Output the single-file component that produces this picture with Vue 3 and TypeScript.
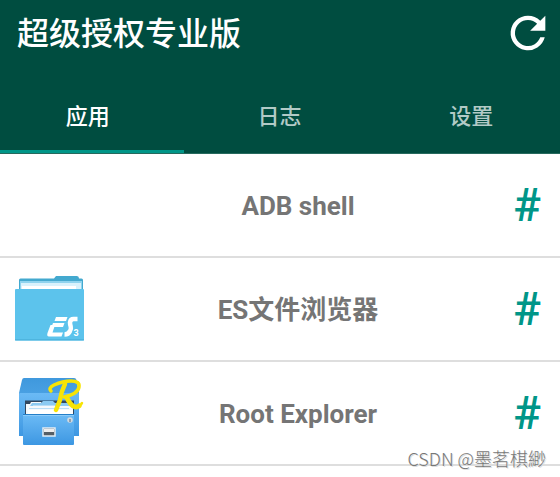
<script setup lang="ts">
import { ref } from 'vue'

interface AppEntry {
  id: string
  name: string
  icon: 'none' | 'folder' | 'cabinet'
}

const tabs: string[] = ['应用', '日志', '设置']
const activeTab = ref(0)

const apps: AppEntry[] = [
  { id: 'adb', name: 'ADB shell', icon: 'none' },
  { id: 'es', name: 'ES文件浏览器', icon: 'folder' },
  { id: 'root', name: 'Root Explorer', icon: 'cabinet' },
]
</script>

<template>
  <div class="screen">
    <header class="header">
      <div class="toolbar">
        <h1 class="title">超级授权专业版</h1>
        <button class="refresh" type="button" aria-label="刷新">
          <svg viewBox="0 0 24 24" aria-hidden="true">
            <path
              fill="#fff"
              d="M17.65 6.35A7.96 7.96 0 0 0 12 4a8 8 0 1 0 7.73 10h-2.08A6 6 0 1 1 12 6c1.66 0 3.14.69 4.22 1.78L13 11h7V4z"
            />
          </svg>
        </button>
      </div>
      <nav class="tabs" role="tablist">
        <button
          v-for="(tab, index) in tabs"
          :key="tab"
          type="button"
          role="tab"
          class="tab"
          :class="{ active: index === activeTab }"
          :aria-selected="index === activeTab"
          @click="activeTab = index"
        >
          {{ tab }}
        </button>
      </nav>
    </header>

    <main>
      <ul class="list">
        <li v-for="app in apps" :key="app.id" class="row">
          <span class="icon">
            <svg v-if="app.icon === 'folder'" viewBox="0 0 72 72" aria-hidden="true">
              <path fill="#43a9cf" d="M5 19V7q0-1.500 1.500-1.500H40L42 3h21q2 0 2 2.500h2.500q1.500 0 1.500 1.500V19z" />
              <path fill="#8fd3ee" d="M6 8h62v12H6z" />
              <path fill="#d9f2fc" d="M7 10h60v9H7z" />
              <path fill="#fff" d="M8 13h54v6H8z" />
              <rect x="1" y="16" width="69" height="51.500" rx="1" fill="#5cc3ec" />
              <path fill="#4eb5df" d="M1 66h69v1.500H1z" />
              <path
                fill="#fff"
                d="M42 44h11.500L52 48H40.500zM39 50h11.500L49 54H37.500zM36.500 52h4.500l-2.500 7.500h10.500l-1.500 4H35q-2.500 0-1.500-3.500z"
              />
              <path fill="none" stroke="#fff" stroke-width="4.500" d="M63.500 46h-4q-3 0-3.500 3.500 0 1.500.7 4t-.7 4.500q-1.500 3.500-5.500 3.500" />
              <text x="59.500" y="63" class="version">3</text>
            </svg>
            <svg v-else-if="app.icon === 'cabinet'" viewBox="0 0 72 72" aria-hidden="true">
              <defs>
                <linearGradient id="cabinet-top" x2="0" y2="1">
                  <stop offset="0" stop-color="#3f98dd" />
                  <stop offset="1" stop-color="#64b5f1" />
                </linearGradient>
                <linearGradient id="cabinet-front" x2="0" y2="1">
                  <stop offset="0" stop-color="#6bbaf5" />
                  <stop offset="1" stop-color="#3d97e2" />
                </linearGradient>
              </defs>
              <path fill="url(#cabinet-top)" d="M10 1h50q2 0 2.500 2L65 16v43H5V16L8 3q.5-2 2-2z" />
              <path fill="url(#cabinet-front)" d="M6 16h58q1 0 1 1v42H5V17q0-1 1-1z" />
              <path fill="#31475f" d="M11 23.500h49V38H11z" />
              <path fill="#f5f9fc" d="M12 27h4l1-2h10l1 2h31v11H12z" />
              <path fill="#8bcaf2" d="M18 26h9l2-2h10l2 2h17v3H16z" />
              <path fill="#b9def7" d="M15 31h40v1H15zM19 28h22v1H19z" />
              <path fill="#fff" d="M14 33h45v4H14z" />
              <path fill="#237fc9" d="M9 37h51v2H9z" />
              <rect x="9" y="38" width="51" height="30" rx="1" fill="url(#cabinet-front)" />
              <path fill="#8bcaf8" d="M9 38h51v1H9z" />
              <rect x="29" y="51" width="12" height="8" fill="#555e66" stroke="#e2edf5" stroke-width="1.500" />
              <path fill="#eee" d="M30 52h10v3H30z" />
              <circle cx="56" cy="43" r="2.800" fill="#d0d9e1" />
              <path stroke="#52667b" d="M56 42v3" />
              <g fill="none" stroke="#f8e405" stroke-linecap="round" stroke-linejoin="round">
                <path stroke-width="3.500" d="M37 14q-3-3 3-6Q49 4 57 4q9 0 8 6-1 7-15 10" />
                <path stroke-width="4.500" d="M51 7q-4 8-5 16l-4 10" />
                <path stroke-width="5" d="M53 21q3 6 6 8 3 2 6 0" />
                <path stroke-width="2.500" d="M61 30q4 1 7-4" />
              </g>
            </svg>
          </span>
          <span class="name">{{ app.name }}</span>
          <span class="hash">#</span>
        </li>
      </ul>
    </main>

    <span class="watermark">CSDN @墨茗棋緲</span>
  </div>
</template>

<style>
body {
  margin: 0;
  background: #fff;
}
</style>

<style scoped>
.screen {
  position: relative;
  padding-bottom: 11px;
  overflow: hidden;
  font-family: Roboto, 'Noto Sans CJK SC', sans-serif;
}

.header {
  background: #004d40;
  color: #fff;
}

.toolbar {
  display: flex;
  align-items: center;
  justify-content: space-between;
  height: 66px;
  padding: 0 6px 0 17px;
}

.title {
  margin: 0;
  padding-top: 2px;
  font-size: 32px;
  line-height: 40px;
  font-weight: 500;
}

.refresh {
  width: 52px;
  height: 52px;
  padding: 0;
  border: 0;
  background: none;
}

.refresh svg,
.icon svg {
  display: block;
  width: 100%;
}

.tabs {
  display: flex;
  margin: 0 -7px 0 -8px;
  padding-top: 12px;
  border-bottom: 1px solid #26695d;
}

.tab {
  flex: 1;
  height: 75px;
  padding: 6px 0 0;
  border: 0;
  border-bottom: 3px solid transparent;
  background: none;
  color: #b2cac6;
  font: 500 22px/32px Roboto, 'Noto Sans CJK SC', sans-serif;
}

.tab.active {
  border-bottom-color: #009688;
  color: #fff;
}

.list {
  margin: 0;
  padding: 0;
  list-style: none;
}

.row {
  display: grid;
  grid-template-columns: 84px 1fr 48px;
  align-items: center;
  height: 102px;
  padding: 0 9px 0 0;
  border-bottom: 2px solid #dedede;
}

.icon {
  width: 72px;
  margin-left: 14px;
}

.name {
  padding: 1px 5px 0 14px;
  color: #757575;
  font-size: 26px;
  line-height: 36px;
  font-weight: 700;
  text-align: center;
}

.hash {
  color: #009688;
  font-size: 46px;
  line-height: 54px;
  font-weight: 500;
  text-align: center;
}

.version {
  fill: #fff;
  font: 700 9px Roboto, sans-serif;
}

.watermark {
  position: absolute;
  right: 14px;
  bottom: 6px;
  color: #777;
  font: 300 18px/26px 'Noto Sans CJK SC', sans-serif;
  text-shadow: 1px 1px 0 #ddd;
}
</style>
